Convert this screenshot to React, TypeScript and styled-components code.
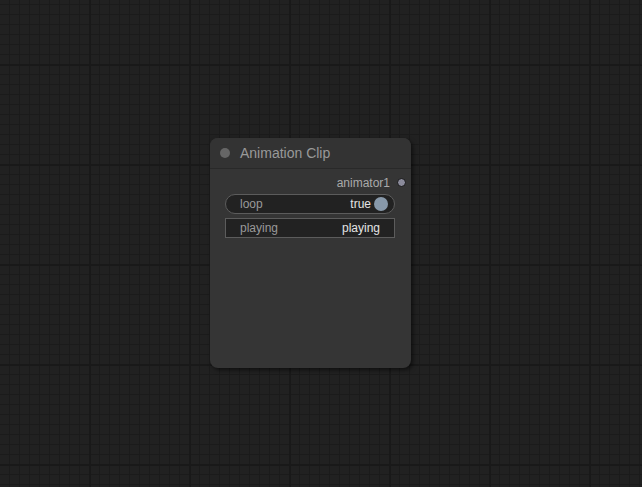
import React from "react";
import styled, { createGlobalStyle } from "styled-components";

const Global = createGlobalStyle`
  html, body { margin: 0; padding: 0; width: 100%; height: 100%; overflow: hidden; }
  body { font-family: "Liberation Sans", Arial, sans-serif; background: #212121; }
  #root { width: 100%; height: 100%; }
`;

const Canvas = styled.div`
  position: relative;
  width: 642px;
  height: 487px;
  background-color: #212121;
  background-image:
    linear-gradient(to right, #191919 2px, transparent 2px),
    linear-gradient(to bottom, #191919 2px, transparent 2px),
    linear-gradient(to right, #1b1b1b 1px, transparent 1px),
    linear-gradient(to bottom, #1b1b1b 1px, transparent 1px);
  background-size: 100px 100px, 100px 100px, 10px 10px, 10px 10px;
  background-position: 89px 0, 0 64px, 9px 0, 0 4px;
  overflow: hidden;
`;

const Node = styled.div<{ $x: number; $y: number; $w: number; $h: number }>`
  position: absolute;
  left: ${(p) => p.$x}px;
  top: ${(p) => p.$y}px;
  width: ${(p) => p.$w}px;
  height: ${(p) => p.$h}px;
  background: #353535;
  border-radius: 8px;
  box-shadow: 2px 2px 4px rgba(0, 0, 0, 0.55);
  display: flex;
  flex-direction: column;
`;

const Title = styled.div`
  height: 31px;
  flex: none;
  display: flex;
  align-items: center;
  padding-left: 10px;
  gap: 10px;
  background: #333;
  border-radius: 8px 8px 0 0;
  border-bottom: 1px solid #292929;
  box-sizing: border-box;
  color: #999;
  font-size: 14px;
`;

const TitleDot = styled.span`
  width: 10px;
  height: 10px;
  border-radius: 50%;
  background: #666;
  flex: none;
`;

const Body = styled.div`
  display: flex;
  flex-direction: column;
  padding: 6px 0 0 15px;
  gap: 4px;
`;

const OutputRow = styled.div`
  height: 15px;
  display: flex;
  align-items: center;
  justify-content: flex-end;
  gap: 7px;
  padding-right: 5px;
  color: #aaa;
  font-size: 12px;
`;

const SlotDot = styled.span`
  width: 7px;
  height: 7px;
  border-radius: 50%;
  background: #8a8a9a;
  border: 1.5px solid #151515;
  flex: none;
`;

const Widget = styled.div<{ $pill?: boolean }>`
  width: 170px;
  height: 20px;
  box-sizing: border-box;
  background: #222;
  border: 1px solid #5c5c5c;
  border-radius: ${(p) => (p.$pill ? "10px" : "0")};
  display: flex;
  align-items: center;
  padding: 0 ${(p) => (p.$pill ? "6px" : "14px")} 0 14px;
  font-size: 12px;
`;

const Label = styled.span`
  color: #999;
  flex: 1;
`;

const Value = styled.span`
  color: #e4e4e4;
`;

const Toggle = styled.span`
  width: 14px;
  height: 14px;
  border-radius: 50%;
  background: #8899aa;
  margin-left: 3px;
  flex: none;
`;

export default function App() {
  return (
    <>
      <Global />
      <Canvas>
        <Node $x={210} $y={138} $w={201} $h={230}>
          <Title>
            <TitleDot />
            <span>Animation Clip</span>
          </Title>
          <Body>
            <OutputRow>
              <span>animator1</span>
              <SlotDot />
            </OutputRow>
            <Widget $pill>
              <Label>loop</Label>
              <Value>true</Value>
              <Toggle />
            </Widget>
            <Widget>
              <Label>playing</Label>
              <Value>playing</Value>
            </Widget>
          </Body>
        </Node>
      </Canvas>
    </>
  );
}
